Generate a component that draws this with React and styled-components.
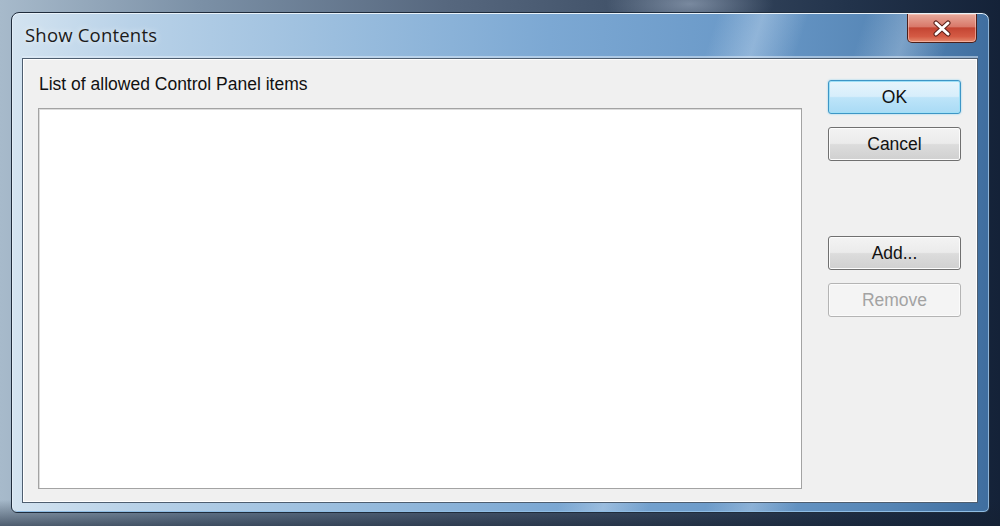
import React from "react";
import styled, { createGlobalStyle } from "styled-components";

const GlobalStyle = createGlobalStyle`
  html, body {
    margin: 0;
    padding: 0;
    width: 1000px;
    height: 526px;
    overflow: hidden;
  }
  * { box-sizing: border-box; }
`;

const Desktop = styled.div`
  width: 1000px;
  height: 526px;
  padding: 12px 10px 13px 11px;
  background:
    radial-gradient(ellipse 120px 40px at 690px 4px, rgba(200, 215, 235, 0.45), transparent 70%),
    linear-gradient(to bottom, rgba(20, 30, 48, 0) 0%, rgba(20, 30, 48, 0) 95%, rgba(20, 32, 50, 0.6) 100%),
    linear-gradient(to right, #a7bacb 0%, #7b90a6 20%, #56677e 45%, #3e4f66 65%, #22334b 85%, #142238 100%);
  font-family: "Liberation Sans", Tahoma, sans-serif;
`;

const Window = styled.div`
  position: relative;
  width: 100%;
  height: 100%;
  display: flex;
  flex-direction: column;
  padding: 0 11px 9px 10px;
  border: 1px solid #1f2c3c;
  border-radius: 8px 8px 6px 6px;
  box-shadow: inset 0 1px 0 #e8f2fa, inset 1px 0 0 #e0ecf6, inset -1px 0 0 #8fb4d6, inset 0 -1px 0 #8fbde4;
  background:
    linear-gradient(108deg, transparent 62%, rgba(220, 235, 250, 0.35) 66%, transparent 70%, transparent 75%, rgba(220, 235, 250, 0.3) 79%, transparent 83%),
    linear-gradient(to right, #d3e3f0 0%, #b9d2e8 12%, #98bcdd 35%, #7ca8d3 55%, #6a99c8 75%, #5585b5 90%, #3f6e9f 100%);
`;

const TitleBar = styled.div`
  height: 45px;
  display: flex;
  justify-content: space-between;
  align-items: flex-start;
  box-shadow: inset 0 -2px 0 rgba(230, 240, 250, 0.5);
`;

const Title = styled.div`
  padding: 10px 0 0 3px;
  font-family: "Open Sans", "Noto Sans", sans-serif;
  font-size: 18.5px;
  line-height: 24px;
  color: #1b1b1b;
  letter-spacing: 0.2px;
  text-shadow: 0 0 6px rgba(255, 255, 255, 0.9);
`;

const CloseButton = styled.button`
  width: 70px;
  height: 29px;
  margin: 1px 1px 0 0;
  padding: 0;
  display: flex;
  align-items: center;
  justify-content: center;
  border: 1px solid #4b1f1a;
  border-top: none;
  border-radius: 0 0 5px 5px;
  background: linear-gradient(to bottom, #e7aa9c 0%, #d9796a 45%, #c44533 50%, #d45a44 80%, #e48a6e 100%);
  box-shadow: inset 0 0 0 1px rgba(255, 210, 200, 0.55);
`;

const Client = styled.div`
  flex: 1;
  display: grid;
  grid-template-columns: 764px 133px;
  column-gap: 26px;
  padding: 15px 16px 13px 15px;
  background: #f0f0f0;
  border: 1px solid #4e5e70;
  box-shadow: inset 0 0 0 1px #ffffff;
`;

const LeftColumn = styled.div`
  display: flex;
  flex-direction: column;
`;

const Label = styled.div`
  font-size: 17.5px;
  line-height: 21px;
  color: #111;
  margin-bottom: 13px;
  padding-left: 1px;
`;

const ListBox = styled.div`
  flex: 1;
  background: #ffffff;
  border: 1px solid #a3a3a3;
  box-shadow: inset 1px 1px 0 #dcdcdc;
`;

const ButtonColumn = styled.div`
  display: flex;
  flex-direction: column;
  padding-top: 6px;
`;

const Button = styled.button`
  width: 133px;
  height: 34px;
  margin-top: ${(p) => p.$gap || 0}px;
  padding: 0;
  font-family: "Liberation Sans", Tahoma, sans-serif;
  font-size: 17.5px;
  color: ${(p) => (p.disabled ? "#a3a3a3" : "#111")};
  border-radius: 3px;
  border: 1px solid ${(p) => (p.$default ? "#3d96c6" : p.disabled ? "#b4b4b4" : "#707070")};
  background: ${(p) =>
    p.$default
      ? "linear-gradient(to bottom, #e6f5fc 0%, #d7eefb 48%, #bde4f9 52%, #a9dbf5 100%)"
      : p.disabled
      ? "#f4f4f4"
      : "linear-gradient(to bottom, #f3f3f3 0%, #ebebeb 48%, #dcdcdc 52%, #d0d0d0 100%)"};
  box-shadow: ${(p) =>
    p.$default
      ? "inset 0 0 0 1px #9fe0f7, 0 0 2px #7ecdf0"
      : p.disabled
      ? "inset 0 0 0 1px #fbfbfb"
      : "inset 0 0 0 1px #fcfcfc"};
`;

function CloseGlyph() {
  return (
    <svg width="20" height="17" viewBox="0 0 20 17">
      <path d="M4 3 L16 14 M16 3 L4 14" stroke="#5a2018" strokeWidth="5" strokeLinecap="round" />
      <path d="M4 3 L16 14 M16 3 L4 14" stroke="#ffffff" strokeWidth="3" strokeLinecap="round" />
    </svg>
  );
}

export default function App() {
  return (
    <>
      <GlobalStyle />
      <Desktop>
        <Window>
          <TitleBar>
            <Title>Show Contents</Title>
            <CloseButton aria-label="Close">
              <CloseGlyph />
            </CloseButton>
          </TitleBar>
          <Client>
            <LeftColumn>
              <Label>List of allowed Control Panel items</Label>
              <ListBox />
            </LeftColumn>
            <ButtonColumn>
              <Button $default>OK</Button>
              <Button $gap={13}>Cancel</Button>
              <Button $gap={75}>Add...</Button>
              <Button $gap={13} disabled>Remove</Button>
            </ButtonColumn>
          </Client>
        </Window>
      </Desktop>
    </>
  );
}
